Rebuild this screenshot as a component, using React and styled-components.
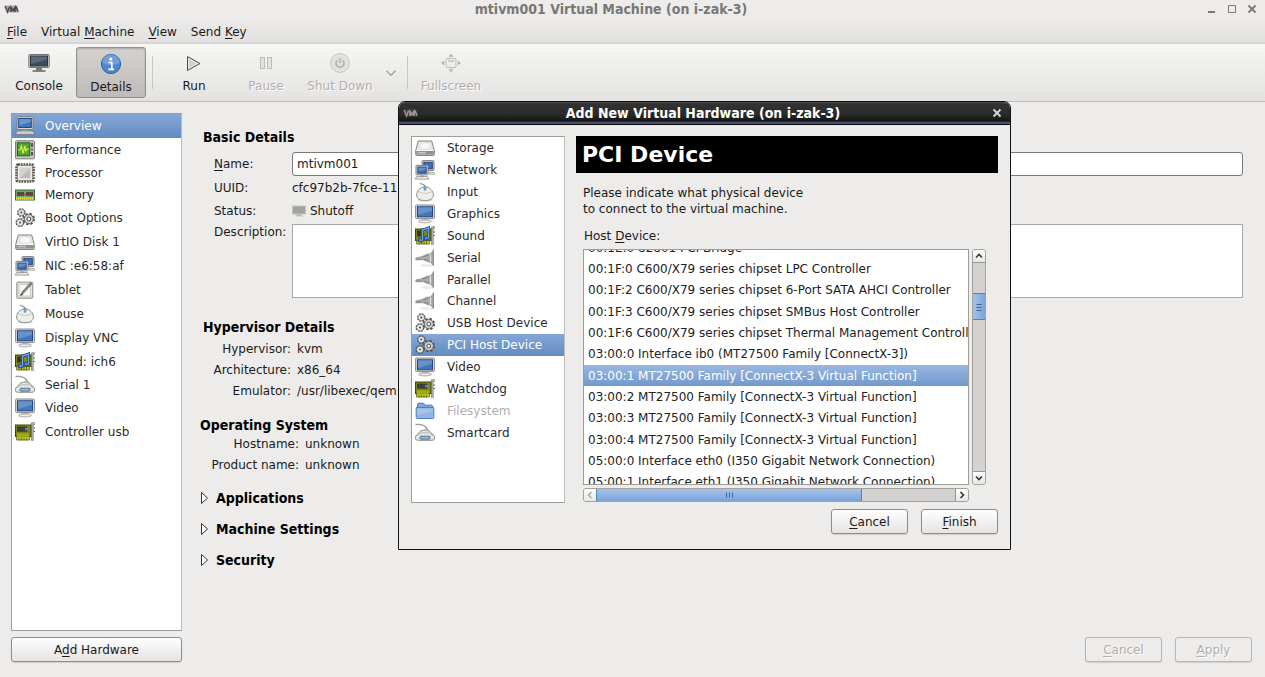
import { useState } from 'react';
import styled, { createGlobalStyle, css } from 'styled-components';

const GlobalStyle = createGlobalStyle`
  * {
    box-sizing: border-box;
  }
  body {
    margin: 0;
    background: #edeceb;
    color: #1a1a1a;
    font-family: "DejaVu Sans", sans-serif;
    font-size: 12px;
    line-height: 16px;
  }
  button, input, textarea {
    font: inherit;
    color: inherit;
    margin: 0;
  }
  u {
    text-underline-offset: 2px;
  }
  svg {
    display: block;
    flex: none;
  }
`

const boldFont = css`
  font: bold 14px/16px "DejaVu Sans Condensed", "DejaVu Sans", sans-serif;
`

const Window = styled.div`
  position: relative;
  display: flex;
  flex-direction: column;
  min-height: 100vh;
`
const Header = styled.header`
  height: 44px;
  background: linear-gradient(#edeceb 40%, #e2e1df);
  border-bottom: 2px solid #d6d5d3;
`
const TitleBar = styled.div`
  display: grid;
  grid-template-columns: 20px 1fr 60px;
  align-items: center;
  height: 18px;
  padding: 0 7px 0 4px;
  color: #787774;
`
const Title = styled.h1`
  margin: 0;
  text-align: center;
  ${boldFont}
`
const WindowButtons = styled.div`
  display: flex;
  justify-content: flex-end;
  gap: 8px;
`
const PlainButton = styled.button`
  padding: 0;
  border: none;
  background: none;
`
const MenuBar = styled.nav`
  display: flex;
  gap: 14px;
  padding: 6px 7px;
`
const MenuItem = styled.button`
  padding: 0;
  border: none;
  background: none;
`
const Toolbar = styled.div`
  display: flex;
  align-items: center;
  height: 58px;
  padding: 0 4px;
  background: linear-gradient(#f6f6f4, #e4e3e1);
  border-bottom: 1px solid #bdbcba;
`
const ToolButton = styled.button`
  display: flex;
  flex-direction: column;
  align-items: center;
  justify-content: space-between;
  width: ${({ $wide }) => ($wide ? 74 : 70)}px;
  height: 51px;
  margin-right: 2px;
  padding: 5px 0 3px;
  border: 1px solid transparent;
  border-radius: 3px;
  background: none;
  white-space: nowrap;
  &:disabled {
    color: #b0afad;
    text-shadow: 1px 1px 0 #fff;
  }
  ${({ $active }) => $active && css`
    border-color: #91908d;
    background: linear-gradient(#d3d2d0, #bfbbb8);
    box-shadow: inset 0 1px 2px #a9a7a4;
    padding-bottom: 2px;
  `}
`
const Separator = styled.div`
  width: 1px;
  height: 33px;
  margin: 0 6px 0 4px;
  background: #c8c7c5;
`
const MenuArrow = styled.button`
  display: grid;
  place-items: center;
  width: 24px;
  height: 40px;
  padding: 0;
  border: none;
  background: none;
`
const Content = styled.main`
  flex: 1;
  display: grid;
  grid-template-columns: 171px 1fr;
  gap: 18px;
  padding: 11px 13px 15px 11px;
`
const Sidebar = styled.div`
  display: flex;
  flex-direction: column;
  gap: 6px;
`
const HardwareList = styled.ul`
  flex: 1;
  margin: 0;
  padding: 0;
  list-style: none;
  background: #fff;
  border: 1px solid #9f9d9a;
  border-right-color: #bebcb9;
`
const HardwareRow = styled.button`
  display: flex;
  align-items: center;
  gap: ${({ $gap }) => $gap || 10}px;
  width: 100%;
  height: ${({ $height }) => $height || 24}px;
  padding: 0 3px;
  border: none;
  background: ${({ $selected }) => ($selected ? 'linear-gradient(#84a7d8, #628cc1)' : 'none')};
  color: ${({ $selected }) => ($selected ? '#fff' : '#2b2b2b')};
  text-align: left;
  white-space: nowrap;
  &:disabled {
    color: #b0aeab;
  }
`
const Button = styled.button`
  height: 25px;
  min-width: ${({ $fill }) => ($fill ? '100%' : '77px')};
  padding: 0 8px;
  border: 1px solid #8e8c89;
  border-radius: 3px;
  background: linear-gradient(#fff, #efeeed 60%, #e6e5e3);
  box-shadow: 0 1px 1px #d2d1cf;
  &:disabled {
    color: #b0aeab;
    border-color: #b8b6b3;
    background: #edeceb;
    text-shadow: 1px 1px 0 #fff;
  }
`
const Details = styled.div`
  display: flex;
  flex-direction: column;
  padding-top: 16px;
`
const Section = styled.section`
  margin: 0 0 ${({ $after }) => $after}px;
  padding-left: ${({ $indent }) => $indent || 0}px;
`
const Heading = styled.h2`
  margin: 0;
  color: #000;
  ${boldFont}
`
const BasicGrid = styled.div`
  display: grid;
  grid-template-columns: 78px 1fr;
  margin-top: 7px;
  padding-left: 11px;
  padding-right: 9px;
`
const Cell = styled.div`
  display: flex;
  align-items: center;
  gap: 4px;
  height: ${({ $height }) => $height || 21}px;
`
const NameInput = styled.input`
  width: 100%;
  height: 24px;
  padding: 0 4px;
  border: 1px solid #7b7976;
  border-radius: 3px;
  background: #fff;
`
const DescriptionText = styled.textarea`
  display: block;
  width: 100%;
  height: 74px;
  margin-top: 3px;
  border: 1px solid #a9a7a4;
  background: #fff;
  resize: none;
`
const FactGrid = styled.dl`
  display: grid;
  grid-template-columns: ${({ $label }) => $label}px 1fr;
  grid-auto-rows: 21px;
  align-items: center;
  column-gap: 6px;
  margin: ${({ $top }) => $top || 0}px 0 0;
  dt {
    text-align: right;
  }
  dd {
    margin: 0;
  }
`
const Expander = styled.button`
  display: flex;
  align-items: center;
  gap: 7px;
  height: 31px;
  padding: 0;
  border: none;
  background: none;
  color: #000;
  ${boldFont}
`
const Actions = styled.div`
  display: flex;
  justify-content: flex-end;
  gap: 13px;
  margin-top: ${({ $top }) => $top || 'auto'};
`

const Dialog = styled.div`
  position: absolute;
  top: 101px;
  left: 398px;
  width: 613px;
  border: 1px solid #111;
  border-radius: 7px 7px 0 0;
  background: #edeceb;
`
const DialogBar = styled.div`
  display: grid;
  grid-template-columns: 30px 1fr 30px;
  align-items: center;
  height: 23px;
  padding: 0 7px 0 4px;
  border-bottom: 1px solid #000;
  border-radius: 6px 6px 0 0;
  background: linear-gradient(#4a4a4a, #323232 10%, #2b2b2b 55%, #161616 85%, #45597a 95%);
  color: #fff;
`
const DialogBody = styled.div`
  display: grid;
  grid-template-columns: 154px 1fr;
  gap: 11px;
  padding: 11px 12px 15px;
`
const DialogList = styled(HardwareList)`
  height: 367px;
`
const Banner = styled.h2`
  margin: 0;
  padding: 0 6px;
  background: #000;
  color: #fff;
  font: bold 22px/37px "DejaVu Sans", sans-serif;
`
const Hint = styled.p`
  margin: 12px 7px 11px;
`
const HostLabel = styled.div`
  margin-left: 8px;
`
const DeviceArea = styled.div`
  display: grid;
  grid-template-columns: 1fr 14px;
  gap: 3px;
  margin: 5px 12px 0 7px;
`
const DeviceBox = styled.div`
  height: 236px;
  min-width: 0;
  overflow: hidden;
  background: #fff;
  border: 1px solid #9f9d9a;
`
// The list is scrolled, so the first entry is partly out of the box
const DeviceList = styled.ul`
  margin: -13px 0 0;
  padding: 0;
  list-style: none;
  li:nth-child(3n) button {
    height: 22px;
  }
`
const DeviceRow = styled.button`
  display: block;
  width: 100%;
  height: 21px;
  padding: 0 4px;
  border: none;
  background: ${({ $selected }) => ($selected ? 'linear-gradient(#9ab8e2, #7299cd)' : 'none')};
  color: ${({ $selected }) => ($selected ? '#fff' : '#222')};
  text-align: left;
  white-space: nowrap;
`
const Scrollbar = styled.div`
  display: flex;
  flex-direction: ${({ $vertical }) => ($vertical ? 'column' : 'row')};
  height: ${({ $vertical }) => ($vertical ? 'auto' : '14px')};
  border: 1px solid #a3a19e;
  border-radius: 3px;
  background: #d3d2d0;
  overflow: hidden;
`
const ScrollArrow = styled.button`
  display: grid;
  place-items: center;
  flex: 0 0 12px;
  padding: 0;
  border: none;
  background: linear-gradient(#fff, #e8e7e5);
  box-shadow: 0 0 0 1px #989693;
`
const ScrollTrack = styled.div`
  display: flex;
  flex-direction: inherit;
  flex: 1;
`
const ScrollThumb = styled.div`
  display: grid;
  place-items: center;
  border: 1px solid #5580b8;
  border-width: ${({ $vertical }) => ($vertical ? '1px 0' : '0 1px')};
  background: linear-gradient(${({ $vertical }) => ($vertical ? '90deg' : '180deg')}, #a5c3ea, #7ba3d8);
`

/* ---------- icons ---------- */

const Svg = ({ children }) => (
    <svg width="20" height="20" viewBox="0 0 20 20" aria-hidden="true">{children}</svg>
)

const VmLogo = ({ dark }) => (
    <svg width="16" height="12" viewBox="0 0 16 12" aria-hidden="true">
        <path d="M1 2.500h12l2 7H3z" fill={dark ? '#444' : '#a9a7a6'} />
        <path d="M1 3l2.500 6L5.500 4M7 9V4.500l2 3 2-3V9M12 3.500l2 5" fill="none" stroke={dark ? '#98989c' : '#4a4a50'} strokeWidth="1.6" />
        <path d="M1.500 5l1.500 4" stroke="#a05f6c" />
    </svg>
)

const MonitorIcon = () => (
    <Svg>
        <path d="M7 14h6l1 3H6z" fill="#c9c9c7" />
        <ellipse cx="10" cy="17.4" rx="6.5" ry="1.5" fill="#ececea" stroke="#9a9b98" strokeWidth=".8" />
        <rect x=".6" y="1" width="18.8" height="13.6" rx="1" fill="#d6d7d3" stroke="#8a8c88" />
        <rect x="2.5" y="2.8" width="15" height="10" fill="#4577b8" stroke="#1f4788" />
        <path d="M3 3.3h14v3.5L3 11z" fill="#7ba2d4" opacity=".65" />
    </Svg>
)

const ComputerIcon = () => (
    <Svg>
        <path d="M7 13h6v3H7z" fill="#b8b9b5" />
        <rect x="2" y=".8" width="16" height="12.6" rx="1" fill="#e2e3df" stroke="#777974" />
        <rect x="3.7" y="2.5" width="12.6" height="9" fill="#4275b8" stroke="#22498a" />
        <path d="M4.2 3h11.6v3L4.2 9.5z" fill="#84a8d8" opacity=".6" />
        <path d="M2.5 15h15l2 3.6H.5z" fill="#f0f0ee" stroke="#777974" strokeWidth=".9" />
        <path d="M3 16.2h14M2.4 17.4h15.2" stroke="#a8aaa6" strokeWidth=".6" />
    </Svg>
)

const NetworkIcon = () => (
    <Svg>
        <rect x="7" y=".6" width="12" height="10" rx=".8" fill="#dcddd9" stroke="#7d7f7b" />
        <rect x="8.8" y="2.3" width="8.5" height="6.5" fill="#3c70b5" stroke="#1f4788" />
        <path d="M14 12.500h5.500v1.800H14z" fill="#e4e4e2" stroke="#8b8d89" strokeWidth=".6" />
        <rect x="1" y="5.3" width="12" height="9.6" rx=".8" fill="#e3e4e0" stroke="#7d7f7b" />
        <rect x="2.8" y="7" width="8.4" height="6.2" fill="#3c70b5" stroke="#1f4788" />
        <path d="M3.3 7.5h7.4v2L3.3 11.6z" fill="#7ba2d4" opacity=".6" />
        <path d="M5 15h4v2H5z" fill="#b5b6b3" />
        <path d="M1.5 16.6h11l1.2 2.5H.4z" fill="#efefed" stroke="#85877f" strokeWidth=".8" />
    </Svg>
)

const PerformanceIcon = () => (
    <Svg>
        <rect x=".6" y=".8" width="18.8" height="18" rx="1" fill="#c9cac5" stroke="#777974" />
        <rect x="2.4" y="2.8" width="12.4" height="13" fill="#48a030" stroke="#256018" />
        <path d="M3 9.2h11M3 5.8h11M3 12.6h11M6 3v12.5M9 3v12.5M12 3v12.5" stroke="#6fb34a" strokeWidth=".5" />
        <path d="M3 10h2l1.500-4 1.500 7.500L9.800 6 11 11l1-2h2" fill="none" stroke="#d9ee42" strokeWidth="1.2" />
        <rect x="16" y="3" width="2" height="4" fill="#555" />
        <rect x="16" y="8.5" width="2" height="2" fill="#666" />
        <rect x="16" y="12" width="2" height="3.5" fill="#555" />
    </Svg>
)

const ProcessorIcon = () => (
    <Svg>
        <rect x="1.6" y="1.6" width="16.8" height="16.8" rx="1.5" fill="none" stroke="#50524e" strokeWidth="2.8" strokeDasharray="1.8 .9" />
        <rect x="2.4" y="2.4" width="15.2" height="15.2" rx="1.5" fill="#ecece9" stroke="#777975" strokeWidth=".8" />
        <rect x="4.4" y="4.4" width="11.2" height="11.2" rx=".6" fill="#d2d3cf" />
        <path d="M5 15L15 5v10z" fill="#bdbeba" />
    </Svg>
)

const MemoryIcon = () => (
    <Svg>
        <rect x=".5" y="5" width="19" height="10" fill="#74a96a" stroke="#3c6b38" />
        <rect x="2" y="7.2" width="7" height="3.6" fill="#3a443b" />
        <rect x="11" y="7.2" width="7" height="3.6" fill="#3a443b" />
        <path d="M2 9.400h16" stroke="#94403c" strokeWidth=".9" />
        <path d="M1 13.500h18" stroke="#e9d54e" strokeWidth="2.4" strokeDasharray="1.5 .5" />
    </Svg>
)

const GearsIcon = () => (
    <Svg>
        <g fill="none" stroke="#4f514e">
            <circle cx="6.3" cy="4.6" r="3" strokeWidth="2.6" strokeDasharray="1.6 .75" />
            <circle cx="5" cy="14.6" r="3.2" strokeWidth="2.6" strokeDasharray="1.75 .75" />
        </g>
        <g fill="#ececea" stroke="#777975" strokeWidth=".5">
            <circle cx="6.3" cy="4.6" r="3" />
            <circle cx="5" cy="14.6" r="3.2" />
        </g>
        <circle cx="13.8" cy="11" r="4.8" fill="#c6c7c3" stroke="#50524f" strokeWidth="2.8" strokeDasharray="2.2 1.57" />
        <circle cx="13.8" cy="11" r="4.5" fill="#cfd0cc" stroke="#50524f" strokeWidth=".6" />
        <circle cx="13.8" cy="11" r="1.9" fill="#f4f4f2" stroke="#50524f" />
        <circle cx="6.3" cy="4.6" r="1" fill="#444" />
        <circle cx="5" cy="14.6" r="1" fill="#444" />
    </Svg>
)

const DiskIcon = () => (
    <Svg>
        <path d="M3.3 3h13.4l2.6 9.5v4a1 1 0 0 1-1 1H1.7a1 1 0 0 1-1-1v-4z" fill="#e8e8e5" stroke="#80827e" />
        <path d="M1.2 12.6h17.6v4H1.2z" fill="#8e908c" />
        <path d="M3 14.6h8" stroke="#c9cac6" strokeWidth="1.4" />
        <path d="M1.4 12.4h17.2" stroke="#fff" />
        <ellipse cx="10" cy="8" rx="5.8" ry="3.4" fill="#f8f8f6" stroke="#d4d5d1" strokeWidth=".7" />
    </Svg>
)

const TabletIcon = () => (
    <Svg>
        <rect x="1.8" y="2.2" width="16" height="16" rx=".8" fill="#e4e5e1" stroke="#8b8d89" />
        <rect x="4" y="4.6" width="11.6" height="11.4" fill="#fafaf9" stroke="#bdbebb" strokeWidth=".8" />
        <path d="M6.500 14l1.500-.3 9-9.700-1.500-1.400-8.400 9.400z" fill="#8c8e8a" stroke="#555" strokeWidth=".7" />
        <path d="M5.2 15.2l2.4-.8" stroke="#222" strokeWidth="1.2" />
    </Svg>
)

const MouseIcon = () => (
    <Svg>
        <path d="M5 .8c.6 1.800 4.800.4 5 4" fill="none" stroke="#8f918d" strokeWidth="1.1" />
        <ellipse cx="10" cy="18" rx="7.5" ry="1.6" fill="#d4d4d2" />
        <path d="M10 4.8c4.8 0 8.4 4.4 8.4 8.2s-3.800 5.600-8.400 5.600S1.600 16.800 1.600 13 5.200 4.800 10 4.800z" fill="#eeeeeb" stroke="#8f918d" />
        <path d="M3.2 9.500c3.800 2.400 9.800 2.400 13.600 0" fill="none" stroke="#bcbdb9" strokeWidth=".8" />
        <rect x="9" y="4" width="2" height="4.4" rx="1" fill="#6fb0e8" stroke="#4784bd" strokeWidth=".6" />
    </Svg>
)

const CardBase = () => (
    <>
        <rect x=".5" y="3" width="15.5" height="11.5" fill="#7d8a12" stroke="#3f4708" />
        <path d="M1.500 14.500h13v3.500h-13z" fill="#c6c91e" stroke="#555c0c" strokeWidth=".7" />
        <path d="M4 12v6.500M6.500 12v6.500M9 12v6.500M11.500 12v6.500" stroke="#555c0c" strokeWidth=".8" />
        <path d="M20 1.500h-2.600v17.300" fill="none" stroke="#5f615d" strokeWidth="2.2" />
        <path d="M20 1.500h-2.600v17.300" fill="none" stroke="#bdbfba" strokeWidth=".9" />
        <path d="M18.500 6H20M18.500 9.500H20" stroke="#5f615d" strokeWidth="1.2" />
    </>
)

const CardIcon = () => (
    <Svg>
        <CardBase />
        <path d="M2 11.500h12v5H2z" fill="#b9bf22" opacity=".7" />
        <rect x="2.5" y="5" width="9.5" height="4.2" fill="#3d423f" stroke="#23261f" strokeWidth=".6" />
        <rect x="10" y="5.8" width="4" height="2.5" fill="#66879c" />
    </Svg>
)

const SoundIcon = () => (
    <Svg>
        <CardBase />
        <rect x="2" y="4.5" width="6" height="6" fill="#363b1f" />
        <ellipse cx="5.8" cy="14" rx="2.7" ry="2" fill="#5b92dc" stroke="#1c3f7c" />
        <ellipse cx="11.8" cy="12" rx="2.7" ry="2" fill="#5b92dc" stroke="#1c3f7c" />
        <path d="M7.500 14V4l6-2v10" fill="none" stroke="#1c3f7c" strokeWidth="3" />
        <path d="M7.500 14V4l6-2v10" fill="none" stroke="#6ea3e6" strokeWidth="1.6" />
    </Svg>
)

const ModemIcon = () => (
    <Svg>
        <path d="M.5 1.500c5-.5 9 .5 11 3.500l2 4" fill="none" stroke="#989a96" strokeWidth="1.4" />
        <path d="M5 8.500c2.500-2 7.500-2 10 0l4.500 4.800c.8 3-.5 4-3 4h-13c-2.800 0-3.800-1.500-3-4z" fill="#e5e5e2" stroke="#7d7f7b" strokeWidth=".9" />
        <path d="M1.500 13L6 9.800h8l4.500 3.200" fill="none" stroke="#b1b3af" strokeWidth=".8" />
        <rect x="5" y="13.2" width="10" height="3" rx="1" fill="#7fa0c6" stroke="#54708f" strokeWidth=".8" />
        <path d="M6.500 14.700h7" stroke="#d7e4f2" strokeWidth=".9" strokeDasharray="1 .8" />
    </Svg>
)

const PlugIcon = () => (
    <Svg>
        <ellipse cx="12" cy="17.5" rx="7" ry="1.5" fill="#ebebe9" />
        <path d="M.8 9.800L7 8.500l5-2.500h3l3.500-3.500v15L15 14h-2l-5-2.300-7.200.3z" fill="#adaeaa" stroke="#8f918d" strokeWidth=".6" />
        <path d="M7.500 9l6-1.800M8.500 11.200l5 1M1.500 11h5" stroke="#7d7f7b" strokeWidth=".9" />
        <path d="M15.500 6.500v7" stroke="#e2e3df" />
        <path d="M18.300 1.500v16" stroke="#8a8c88" strokeWidth="1.2" />
    </Svg>
)

const FolderIcon = () => (
    <Svg>
        <path d="M2.500 9V3.200a1 1 0 0 1 1-1h5l1.500 2h6.500a1 1 0 0 1 1 1V9z" fill="#7aa6d8" stroke="#4a7ab2" />
        <path d="M1.200 6.500h17.600v10a1 1 0 0 1-1 1H2.200a1 1 0 0 1-1-1z" fill="#8fb5e2" stroke="#4f80ba" />
        <path d="M2.200 7.500h15.600V11L2.200 14z" fill="#b0cdec" opacity=".6" />
    </Svg>
)

const ConsoleIcon = () => (
    <svg width="22" height="20" viewBox="0 0 22 20" aria-hidden="true">
        <rect x=".8" y="1.5" width="20.4" height="13" rx="1" fill="#d2d3cf" stroke="#73756f" />
        <rect x="2.5" y="3" width="17" height="10" fill="#3d4b5c" stroke="#29333f" />
        <path d="M3 3.500h16v3L3 11z" fill="#7587a0" opacity=".5" />
        <path d="M8 15h6v2.500H8z" fill="#777974" />
        <path d="M4.500 18h13" stroke="#686a66" strokeWidth="1.6" />
    </svg>
)

const InfoIcon = () => (
    <svg width="22" height="22" viewBox="0 0 22 22" aria-hidden="true">
        <circle cx="11" cy="11" r="9.6" fill="#4f87cc" stroke="#2d5f9f" />
        <path d="M2.300 10a8.700 8.700 0 0 1 17.400 0c-5 2.500-12 2.500-17.400 0z" fill="#86aee0" opacity=".6" />
        <circle cx="10.8" cy="6" r="1.6" fill="#fff" />
        <path d="M8.500 9.500h3.300V16M8.300 16.300h5.600" fill="none" stroke="#fff" strokeWidth="1.7" />
    </svg>
)

const RunIcon = () => (
    <Svg>
        <path d="M3.500 3.500l12.500 7-12.500 7z" fill="#cfcfcd" stroke="#50524f" strokeLinejoin="round" />
        <path d="M4.800 5.700l8.500 4.800-8.500 4.800z" fill="none" stroke="#f0f0ee" strokeWidth=".8" />
    </Svg>
)

const PauseIcon = () => (
    <Svg>
        <rect x="4.5" y="4.5" width="4" height="11" fill="#e3e2e0" stroke="#bdbcba" />
        <rect x="11.5" y="4.5" width="4" height="11" fill="#e3e2e0" stroke="#bdbcba" />
    </Svg>
)

const PowerIcon = () => (
    <Svg>
        <circle cx="10" cy="10" r="9.3" fill="#e9e8e6" stroke="#bfbebc" />
        <circle cx="10" cy="10" r="7.3" fill="#e0dfdd" />
        <path d="M7.400 7.200a4 4 0 1 0 5.200 0M10 5v5" fill="none" stroke="#aeadab" strokeWidth="1.4" />
    </Svg>
)

const FullscreenIcon = () => (
    <Svg>
        <rect x="5" y="5.5" width="10" height="9" rx="1" fill="#efeeec" stroke="#bcbbb9" />
        <path d="M7 8h6" stroke="#b5b4b2" strokeWidth="1.2" />
        <path d="M10 .8l2.500 3h-5zM10 19.200l2.500-3h-5zM0 10l3.200-2.500v5zM20 10l-3.200-2.500v5z" fill="#b1b0ae" />
    </Svg>
)

const ShutoffIcon = () => (
    <svg width="14" height="12" viewBox="0 0 14 12" aria-hidden="true">
        <rect x=".5" y="1" width="13" height="8" fill="#a2a2a0" stroke="#c4c4c2" />
        <path d="M5 9.500h4v1H5zM3 11h8" fill="#bbb" stroke="#b9b9b7" strokeWidth=".8" />
    </svg>
)

const rotations = { down: 0, left: 90, up: 180, right: 270 }
const Chevron = ({ dir = 'down', size = 8, color = '#333', width = 1.6 }) => (
    <svg width={size} height={size} viewBox="0 0 8 8" aria-hidden="true">
        <path d="M1 2.500l3 3 3-3" fill="none" stroke={color} strokeWidth={width} transform={`rotate(${rotations[dir]} 4 4)`} />
    </svg>
)

const Grip = ({ vertical }) => (
    <svg width="8" height="8" viewBox="0 0 8 8" aria-hidden="true">
        <path d={vertical ? 'M1.500 1.500h5M1.500 4.500h5M1.500 7.500h5' : 'M1.500 1.500v5M4.500 1.500v5M7.500 1.500v5'} stroke="#41669a" />
    </svg>
)

const Triangle = () => (
    <svg width="9" height="14" viewBox="0 0 9 14" aria-hidden="true">
        <path d="M1.500 1.500l6 5.500-6 5.500z" fill="#fff" stroke="#333" />
    </svg>
)

const CloseMark = ({ color }) => (
    <svg width="12" height="12" viewBox="0 0 12 12" aria-hidden="true">
        <path d="M2.500 2.500l7 7M9.500 2.500l-7 7" stroke={color} strokeWidth="1.8" />
    </svg>
)

/* ---------- data ---------- */

const machineHardware = [
    { name: 'Overview', icon: ComputerIcon },
    { name: 'Performance', icon: PerformanceIcon, height: 23 },
    { name: 'Processor', icon: ProcessorIcon, height: 23 },
    { name: 'Memory', icon: MemoryIcon, height: 22 },
    { name: 'Boot Options', icon: GearsIcon },
    { name: 'VirtIO Disk 1', icon: DiskIcon },
    { name: 'NIC :e6:58:af', icon: NetworkIcon },
    { name: 'Tablet', icon: TabletIcon },
    { name: 'Mouse', icon: MouseIcon },
    { name: 'Display VNC', icon: MonitorIcon },
    { name: 'Sound: ich6', icon: SoundIcon },
    { name: 'Serial 1', icon: ModemIcon, height: 22 },
    { name: 'Video', icon: MonitorIcon },
    { name: 'Controller usb', icon: CardIcon },
]

const newHardware = [
    { name: 'Storage', icon: DiskIcon },
    { name: 'Network', icon: NetworkIcon },
    { name: 'Input', icon: MouseIcon },
    { name: 'Graphics', icon: MonitorIcon },
    { name: 'Sound', icon: SoundIcon },
    { name: 'Serial', icon: PlugIcon },
    { name: 'Parallel', icon: PlugIcon, height: 21 },
    { name: 'Channel', icon: PlugIcon },
    { name: 'USB Host Device', icon: GearsIcon },
    { name: 'PCI Host Device', icon: GearsIcon },
    { name: 'Video', icon: MonitorIcon },
    { name: 'Watchdog', icon: CardIcon },
    { name: 'Filesystem', icon: FolderIcon, disabled: true },
    { name: 'Smartcard', icon: ModemIcon },
]

const hostDevices = [
    '00:1E:0 82801 PCI Bridge',
    '00:1F:0 C600/X79 series chipset LPC Controller',
    '00:1F:2 C600/X79 series chipset 6-Port SATA AHCI Controller',
    '00:1F:3 C600/X79 series chipset SMBus Host Controller',
    '00:1F:6 C600/X79 series chipset Thermal Management Controller',
    '03:00:0 Interface ib0 (MT27500 Family [ConnectX-3])',
    '03:00:1 MT27500 Family [ConnectX-3 Virtual Function]',
    '03:00:2 MT27500 Family [ConnectX-3 Virtual Function]',
    '03:00:3 MT27500 Family [ConnectX-3 Virtual Function]',
    '03:00:4 MT27500 Family [ConnectX-3 Virtual Function]',
    '05:00:0 Interface eth0 (I350 Gigabit Network Connection)',
    '05:00:1 Interface eth1 (I350 Gigabit Network Connection)',
]

function AddHardwareDialog() {
    const [kind, setKind] = useState('PCI Host Device');
    const [device, setDevice] = useState(hostDevices[6]);

    return (
        <Dialog role="dialog" aria-labelledby="dialog-title">
            <DialogBar>
                <VmLogo dark />
                <Title as="h2" id="dialog-title">Add New Virtual Hardware (on i-zak-3)</Title>
                <WindowButtons>
                    <PlainButton aria-label="Close dialog"><CloseMark color="#d8d8d6" /></PlainButton>
                </WindowButtons>
            </DialogBar>
            <DialogBody>
                <DialogList>
                    {newHardware.map(({ name, icon: Icon, height, disabled }) => (
                        <li key={name}>
                            <HardwareRow
                                $height={height || 22}
                                $gap={12}
                                $selected={name === kind}
                                disabled={disabled}
                                onClick={() => setKind(name)}
                            >
                                <Icon />{name}
                            </HardwareRow>
                        </li>
                    ))}
                </DialogList>
                <div>
                    <Banner>PCI Device</Banner>
                    <Hint>Please indicate what physical device<br />to connect to the virtual machine.</Hint>
                    <HostLabel id="host-device">Host <u>D</u>evice:</HostLabel>
                    <DeviceArea>
                        <DeviceBox>
                            <DeviceList aria-labelledby="host-device">
                                {hostDevices.map((name) => (
                                    <li key={name}>
                                        <DeviceRow $selected={name === device} onClick={() => setDevice(name)}>{name}</DeviceRow>
                                    </li>
                                ))}
                            </DeviceList>
                        </DeviceBox>
                        <Scrollbar $vertical>
                            <ScrollArrow aria-label="Scroll up"><Chevron dir="up" /></ScrollArrow>
                            <ScrollTrack>
                                <ScrollThumb $vertical style={{ height: '13%', marginTop: 31 }}><Grip vertical /></ScrollThumb>
                            </ScrollTrack>
                            <ScrollArrow aria-label="Scroll down"><Chevron /></ScrollArrow>
                        </Scrollbar>
                        <Scrollbar>
                            <ScrollArrow aria-label="Scroll left"><Chevron dir="left" color="#aaa" /></ScrollArrow>
                            <ScrollTrack>
                                <ScrollThumb style={{ width: '74%' }}><Grip /></ScrollThumb>
                            </ScrollTrack>
                            <ScrollArrow aria-label="Scroll right"><Chevron dir="right" /></ScrollArrow>
                        </Scrollbar>
                    </DeviceArea>
                    <Actions $top="7px">
                        <Button><u>C</u>ancel</Button>
                        <Button><u>F</u>inish</Button>
                    </Actions>
                </div>
            </DialogBody>
        </Dialog>
    )
}

function App() {
    const [selected, setSelected] = useState('Overview');

    return (
        <Window>
            <GlobalStyle />
            <Header>
                <TitleBar>
                    <VmLogo />
                    <Title>mtivm001 Virtual Machine (on i-zak-3)</Title>
                    <WindowButtons>
                        <PlainButton aria-label="Minimize">
                            <svg width="12" height="12" viewBox="0 0 12 12"><path d="M2 9h7" stroke="#787774" strokeWidth="2" /></svg>
                        </PlainButton>
                        <PlainButton aria-label="Maximize">
                            <svg width="12" height="12" viewBox="0 0 12 12"><path d="M2.500 2.500h7v7h-7z" fill="none" stroke="#787774" /></svg>
                        </PlainButton>
                        <PlainButton aria-label="Close"><CloseMark color="#787774" /></PlainButton>
                    </WindowButtons>
                </TitleBar>
                <MenuBar>
                    <MenuItem><u>F</u>ile</MenuItem>
                    <MenuItem>Virtual <u>M</u>achine</MenuItem>
                    <MenuItem><u>V</u>iew</MenuItem>
                    <MenuItem>Send <u>K</u>ey</MenuItem>
                </MenuBar>
            </Header>
            <Toolbar>
                <ToolButton><ConsoleIcon />Console</ToolButton>
                <ToolButton $active><InfoIcon />Details</ToolButton>
                <Separator />
                <ToolButton><RunIcon />Run</ToolButton>
                <ToolButton disabled><PauseIcon />Pause</ToolButton>
                <ToolButton disabled $wide><PowerIcon />Shut Down</ToolButton>
                <MenuArrow aria-label="Shut down options"><Chevron size={12} width={1} color="#a3a2a0" /></MenuArrow>
                <Separator />
                <ToolButton disabled $wide><FullscreenIcon />Fullscreen</ToolButton>
            </Toolbar>
            <Content>
                <Sidebar>
                    <HardwareList>
                        {machineHardware.map(({ name, icon: Icon, height }) => (
                            <li key={name}>
                                <HardwareRow $height={height} $selected={name === selected} onClick={() => setSelected(name)}>
                                    <Icon />{name}
                                </HardwareRow>
                            </li>
                        ))}
                    </HardwareList>
                    <Button $fill>A<u>d</u>d Hardware</Button>
                </Sidebar>
                <Details>
                    <Section $indent={3} $after={21}>
                        <Heading>Basic Details</Heading>
                        <BasicGrid>
                            <Cell as="label" htmlFor="name" $height={24}><span><u>N</u>ame:</span></Cell>
                            <Cell $height={24}><NameInput id="name" defaultValue="mtivm001" /></Cell>
                            <Cell $height={24}>UUID:</Cell>
                            <Cell $height={24}>cfc97b2b-7fce-11</Cell>
                            <Cell>Status:</Cell>
                            <Cell><ShutoffIcon />Shutoff</Cell>
                            <Cell as="label" htmlFor="description">Description:</Cell>
                            <DescriptionText id="description" />
                        </BasicGrid>
                    </Section>
                    <Section $indent={3} $after={16}>
                        <Heading>Hypervisor Details</Heading>
                        <FactGrid $label={88} $top={3}>
                            <dt>Hypervisor:</dt><dd>kvm</dd>
                            <dt>Architecture:</dt><dd>x86_64</dd>
                            <dt>Emulator:</dt><dd>/usr/libexec/qem</dd>
                        </FactGrid>
                    </Section>
                    <Section $after={7}>
                        <Heading>Operating System</Heading>
                        <FactGrid $label={99}>
                            <dt>Hostname:</dt><dd>unknown</dd>
                            <dt>Product name:</dt><dd>unknown</dd>
                        </FactGrid>
                    </Section>
                    <Expander><Triangle />Applications</Expander>
                    <Expander><Triangle />Machine Settings</Expander>
                    <Expander><Triangle />Security</Expander>
                    <Actions>
                        <Button disabled><u>C</u>ancel</Button>
                        <Button disabled><u>A</u>pply</Button>
                    </Actions>
                </Details>
            </Content>
        </Window>
    )
}

// The dialog floats above the details window
const Root = () => (
    <>
        <App />
        <AddHardwareDialog />
    </>
)

export default Root;
